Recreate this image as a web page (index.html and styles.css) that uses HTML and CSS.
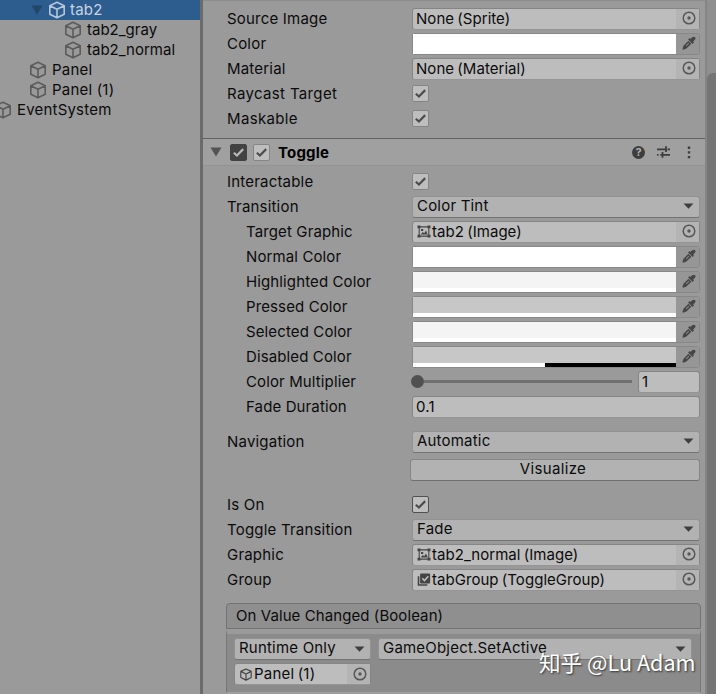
FILE: index.html
```html
<!DOCTYPE html>
<html lang="en">
<head>
<meta charset="utf-8">
<title>Inspector</title>
<link rel="stylesheet" href="styles.css">
</head>
<body>
<svg class="defs" aria-hidden="true">
  <symbol id="cube" viewBox="0 0 18 18"><path d="M9 1.3 16.2 4.7V13.2L9 16.8 1.8 13.2V4.7ZM1.8 4.7 9 8.2 16.2 4.7M9 8.2V16.8" fill="none" stroke="currentColor" stroke-width="1.6" stroke-linejoin="round"/></symbol>
  <symbol id="tri" viewBox="0 0 12 10"><path d="M.5.5H11.5L6 9.5Z" fill="currentColor"/></symbol>
  <symbol id="check" viewBox="0 0 16 16"><path d="M3 8.2 6.3 11.2 13 4.4" fill="none" stroke="currentColor" stroke-width="2.3"/></symbol>
  <symbol id="target" viewBox="0 0 14 14"><circle cx="7" cy="7" r="5.8" fill="none" stroke="currentColor" stroke-width="1.5"/><circle cx="7" cy="7" r="1.7" fill="currentColor"/></symbol>
  <symbol id="dropper" viewBox="0 0 14 14"><path d="M8.1 3.1 10.3 1.2Q12 .1 13.1 1.2 14.1 2.4 12.9 3.8L11.2 5.7 12 6.5 10.6 7.9 6.1 3.4 7.5 2Z" fill="currentColor"/><path d="M6.4 4.8 9.4 7.8 4.4 12.5 1.3 13.8.4 13 1.5 9.7Z" fill="currentColor"/><path d="M6.8 7.2 4.2 9.9" stroke="#858585" stroke-width="1.1"/></symbol>
  <symbol id="image" viewBox="0 0 14 13"><path d="M2.2 1.9H11.8V11.1H2.2Z" fill="none" stroke="currentColor" stroke-width="1.1"/><path d="M.5.4H3.5V3.2H.5ZM10.5.4H13.5V3.2H10.5ZM.5 9.8H3.5V12.6H.5ZM10.5 9.8H13.5V12.6H10.5ZM3.7 9.6 5.8 7 7.2 8.2 9 5.4 10.7 9.6ZM4 4H6.2V6H4Z" fill="currentColor"/></symbol>
  <symbol id="group" viewBox="0 0 13 13"><path d="M1 3.2V12H9.8" fill="none" stroke="currentColor" stroke-width="1.6"/><rect x="2.6" y=".6" width="10" height="9.8" rx="1" fill="currentColor"/><path d="M4.8 5.4 7 7.6 10.8 3.2" fill="none" stroke="#bdbdbd" stroke-width="1.5"/></symbol>
  <symbol id="caret" viewBox="0 0 10 6"><path d="M0 .4H10L5 5.8Z" fill="currentColor"/></symbol>
</svg>

<div class="editor">
  <aside class="hierarchy">
    <div class="node node-selected depth-2"><svg class="fold"><use href="#tri"/></svg><svg class="cube"><use href="#cube"/></svg><span>tab2</span></div>
    <div class="node depth-3"><svg class="cube"><use href="#cube"/></svg><span>tab2_gray</span></div>
    <div class="node depth-3"><svg class="cube"><use href="#cube"/></svg><span>tab2_normal</span></div>
    <div class="node depth-1"><svg class="cube"><use href="#cube"/></svg><span>Panel</span></div>
    <div class="node depth-1"><svg class="cube"><use href="#cube"/></svg><span>Panel (1)</span></div>
    <div class="node depth-0"><svg class="cube"><use href="#cube"/></svg><span>EventSystem</span></div>
  </aside>

  <main class="inspector">
    <section class="props props-image">
      <div class="row"><label>Source Image</label><div class="object"><span>None (Sprite)</span><i><svg><use href="#target"/></svg></i></div></div>
      <div class="row"><label>Color</label><div class="color"><b class="swatch"></b><i><svg><use href="#dropper"/></svg></i></div></div>
      <div class="row"><label>Material</label><div class="object"><span>None (Material)</span><i><svg><use href="#target"/></svg></i></div></div>
      <div class="row"><label class="wide">Raycast Target</label><svg class="box"><use href="#check"/></svg></div>
      <div class="row"><label class="wide">Maskable</label><svg class="box"><use href="#check"/></svg></div>
    </section>

    <header class="component">
      <svg class="fold"><use href="#tri"/></svg>
      <svg class="box box-dark"><use href="#check"/></svg>
      <svg class="box box-enabled"><use href="#check"/></svg>
      <h2>Toggle</h2>
      <span class="help">?</span>
      <svg class="preset" viewBox="0 0 14 12"><path d="M0 3.3H8.5M10.5 3.3H13M9 .3V6M3.3 8.8H13M0 8.8H1.5M5.5 6V11.8" fill="none" stroke="currentColor" stroke-width="1.8"/></svg>
      <svg class="kebab" viewBox="0 0 4 13"><path d="M.8 .5H3.2V2.9H.8ZM.8 5.2H3.2V7.6H.8ZM.8 9.9H3.2V12.3H.8Z" fill="currentColor"/></svg>
    </header>

    <section class="props props-toggle">
      <div class="row"><label>Interactable</label><svg class="box"><use href="#check"/></svg></div>
      <div class="row"><label>Transition</label><div class="select"><span>Color Tint</span><svg><use href="#caret"/></svg></div></div>
      <div class="row sub"><label>Target Graphic</label><div class="object"><svg class="kind"><use href="#image"/></svg><span>tab2 (Image)</span><i><svg><use href="#target"/></svg></i></div></div>
      <div class="row sub"><label>Normal Color</label><div class="color"><b class="swatch"></b><i><svg><use href="#dropper"/></svg></i></div></div>
      <div class="row sub"><label>Highlighted Color</label><div class="color"><b class="swatch light"></b><i><svg><use href="#dropper"/></svg></i></div></div>
      <div class="row sub"><label>Pressed Color</label><div class="color"><b class="swatch gray"></b><i><svg><use href="#dropper"/></svg></i></div></div>
      <div class="row sub"><label>Selected Color</label><div class="color"><b class="swatch light"></b><i><svg><use href="#dropper"/></svg></i></div></div>
      <div class="row sub"><label>Disabled Color</label><div class="color"><b class="swatch gray half"></b><i><svg><use href="#dropper"/></svg></i></div></div>
      <div class="row sub"><label>Color Multiplier</label><div class="slider"><b class="knob"></b><b class="track"></b><div class="input">1</div></div></div>
      <div class="row sub"><label>Fade Duration</label><div class="input">0.1</div></div>
      <div class="row gap-before"><label>Navigation</label><div class="select"><span>Automatic</span><svg><use href="#caret"/></svg></div></div>
      <div class="button">Visualize</div>
      <div class="row"><label>Is On</label><svg class="box box-focus"><use href="#check"/></svg></div>
      <div class="row"><label>Toggle Transition</label><div class="select"><span>Fade</span><svg><use href="#caret"/></svg></div></div>
      <div class="row"><label>Graphic</label><div class="object"><svg class="kind"><use href="#image"/></svg><span>tab2_normal (Image)</span><i><svg><use href="#target"/></svg></i></div></div>
      <div class="row"><label>Group</label><div class="object"><svg class="kind"><use href="#group"/></svg><span>tabGroup (ToggleGroup)</span><i><svg><use href="#target"/></svg></i></div></div>
    </section>

    <section class="event">
      <h3>On Value Changed (Boolean)</h3>
      <div class="listeners">
        <div class="select"><span>Runtime Only</span><svg><use href="#caret"/></svg></div>
        <div class="select"><span>GameObject.SetActive</span><svg><use href="#caret"/></svg></div>
        <div class="object"><svg class="kind"><use href="#cube"/></svg><span>Panel (1)</span><i><svg><use href="#target"/></svg></i></div>
      </div>
    </section>
  </main>
  <div class="scrollbar"><div class="thumb"></div></div>
</div>
<div class="watermark">知乎 @Lu Adam</div>
</body>
</html>
```
FILE: styles.css
```css
* { box-sizing: border-box; }
body {
  margin: 0;
  height: 694px;
  overflow: hidden;
  background: #9a9a9a;
  color: #0b0b0b;
  font: 15px/20px Inter, "Liberation Sans", sans-serif;
  letter-spacing: 0.2px;
  white-space: nowrap;
}
svg { display: block; flex: none; }
.defs { position: absolute; width: 0; height: 0; }
.editor { display: flex; height: 694px; }

/* Hierarchy */
.hierarchy { width: 200px; overflow: hidden; }
.node { display: flex; align-items: center; height: 20px; gap: 5px; }
.node-selected { background: #2d5c8f; color: #c8d4e2; }
.cube { width: 18px; height: 18px; color: #5c5c5c; }
.node-selected .cube { color: #b4c6da; }
.fold { width: 12px; height: 10px; color: #535353; }
.node-selected .fold { color: #234567; }
.node-selected span { margin-left: -1px; }
.depth-0 { padding-left: 0; margin-left: -6px; }
.depth-1 { padding-left: 29px; }
.depth-2 { padding-left: 31px; }
.depth-3 { padding-left: 64px; letter-spacing: 0; }

/* Inspector */
.inspector { width: 505px; height: 694px; border-left: 3px solid #6b6b6b; background: #9a9a9a; overflow: hidden; }
.props-image { border-top: 1px solid #8c8c8c; padding-top: 5px; height: 138px; }
.props-toggle { padding-top: 3px; border-top: 1px solid #939393; }
.row { display: grid; grid-template-columns: 185px 288px; height: 25px; padding-left: 24px; align-items: center; }
.row.sub label { padding-left: 19px; letter-spacing: 0.12px; }
.row label.wide { letter-spacing: 0.35px; }
.gap-before { margin-top: 10px; }
.row > .select, .row > .object, .row > .input, .slider { width: 288px; }

.object, .input, .select {
  display: flex;
  align-items: center;
  height: 22px;
  border: 1px solid #858585;
  border-radius: 3px;
  background: #bdbdbd;
}
.object, .input { padding-left: 3px; border-bottom-color: #959595; }
.object span { flex: 1; letter-spacing: 0.04px; word-spacing: -1px; }
.object i { display: grid; place-items: center; width: 23px; height: 20px; padding-left: 2px; background: #b4b4b4; color: #585858; }
.object i svg { width: 14px; height: 14px; margin-top: -1px; }
.kind { width: 14px; height: 13px; margin: 0 1px; color: #444; }

.select { justify-content: space-between; padding: 0 5px 2px 4px; background: #b2b2b2; border-color: #929292 #929292 #737373; }
.select svg { width: 11px; height: 6px; margin-top: 1px; color: #3e3e3e; }

.color { display: flex; height: 22px; border: 1px solid #888; border-radius: 3px; }
.swatch { width: 263px; height: 20px; background: #fff; border-bottom: 4px solid #fff; }
.swatch.light { background: #f4f4f4; }
.swatch.gray { background: #c7c7c7; }
.swatch.half { border-bottom: 0; background: linear-gradient(90deg, #fff 50.2%, #000 50.2%) 0 16px / 100% 4px no-repeat, #c7c7c7; }
.color i { flex: 1; display: grid; place-items: center; padding-left: 3px; background: #969696; color: #464646; }
.color i svg { width: 14px; height: 14px; margin-top: -1px; }

.box { width: 17px; height: 17px; border: 1px solid #858585; border-radius: 2px; background: #bebebe; color: #4c4c4c; }
.box-dark { background: #424242; border-color: #424242; color: #b8b8b8; }
.box-focus { border-color: #505050; }

.slider { display: flex; align-items: center; }
.knob { width: 13px; height: 13px; margin-left: -1px; border-radius: 50%; background: #505050; }
.track { width: 208px; height: 3px; background: #707070; }
.slider .input { width: 62px; margin-left: auto; }

.button {
  width: 290px;
  height: 22px;
  margin: 5px 0 11px 207px;
  padding-right: 4px;
  border: 1px solid #868686;
  border-bottom-color: #707070;
  border-radius: 3px;
  background: #b2b2b2;
  text-align: center;
  letter-spacing: 0.35px;
  line-height: 18px;
}

.component { display: flex; align-items: center; height: 27px; padding-left: 7px; border-top: 1px solid #626262; background: #a0a0a0; }
.component .box-dark { margin-left: 8px; }
.component .box-enabled { margin-left: 6px; }
.component h2 { flex: 1; margin: 1px 0 0 8px; font-size: 15px; font-weight: 700; color: #000; }
.help { width: 13px; height: 13px; border-radius: 50%; background: #3d3d3d; color: #b0b0b0; font-size: 11px; line-height: 13px; font-weight: 700; text-align: center; letter-spacing: 0; }
.preset { width: 14px; height: 12px; margin-left: 12px; color: #3d3d3d; }
.kebab { width: 4px; height: 13px; margin: 0 14px 0 16px; color: #3d3d3d; }

/* Event list */
.event { width: 475px; margin: 11px 0 0 23px; }
.event h3 { margin: 0; height: 26px; padding: 2px 9px; border: 1px solid #737373; border-radius: 4px 4px 0 0; background: #8f8f8f; font-size: 15px; font-weight: 400; letter-spacing: 0.08px; }
.listeners {
  display: grid;
  grid-template-columns: 137px 314px;
  gap: 3px 7px;
  height: 64px;
  padding: 4px 7px 0;
  align-content: start;
  border: solid #777;
  border-width: 0 1px;
  border-bottom: 1px solid #a0a0a0;
  background: #8b8b8b;
}
.event .listeners { border-top: 5px solid #9a9a9a; }
.listeners .object span { letter-spacing: 0.2px; }

.scrollbar { width: 11px; background: #8f8f8f; border-left: 2px solid #858585; }
.thumb { height: 640px; margin-top: 73px; border-radius: 6px 0 0; background: #757575; }

.watermark {
  position: absolute;
  left: 539px;
  top: 646px;
  color: #fff;
  font: 400 21.6px/32px "Noto Sans CJK SC", sans-serif;
  letter-spacing: 0;
  text-shadow: 1px 1px 2px #333;
}
```
